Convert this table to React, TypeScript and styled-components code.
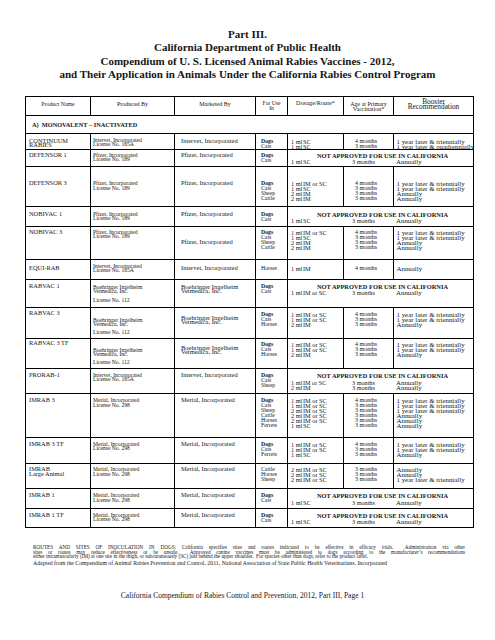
import React from 'react';
import styled, { createGlobalStyle } from 'styled-components';

const Global = createGlobalStyle`
  html, body { margin: 0; padding: 0; background: #fff; }
  body { font-family: "Liberation Serif", "Times New Roman", serif; color: #161616; }
`;

const Page = styled.div`
  width: 495px;
  height: 640px;
  box-sizing: border-box;
  padding-top: 28px;
  overflow: hidden;
`;

const Title = styled.h1`
  margin: 0;
  font-size: 11px;
  line-height: 13.3px;
  font-weight: bold;
  text-align: center;
`;

const Table = styled.table`
  margin: 15px 0 0 25px;
  width: 448px;
  border-collapse: collapse;
  table-layout: fixed;
`;

const Th = styled.th<{ $pt: number; $size: number }>`
  border: 1px solid #000;
  font-weight: normal;
  font-size: ${(p) => p.$size}px;
  line-height: 5.3px;
  text-align: center;
  vertical-align: top;
  padding: ${(p) => p.$pt}px 0 0;
  white-space: pre;
`;

const Row = styled.tr<{ $h: number }>`
  height: ${(p) => p.$h}px;
`;

const SectionCell = styled.td`
  border: 1px solid #000;
  font-weight: bold;
  font-size: 6.3px;
  line-height: 6px;
  padding: 1px 0 0 6px;
  vertical-align: middle;
  white-space: nowrap;
`;

const Td = styled.td<{ $pt: number; $pl: number; $size: number; $lh?: number }>`
  border: 1px solid #000;
  vertical-align: top;
  padding: ${(p) => p.$pt}px 0 0 ${(p) => p.$pl}px;
  font-size: ${(p) => p.$size}px;
  line-height: ${(p) => p.$lh ?? 5}px;
  white-space: pre;
`;

const License = styled.div<{ $gap: number }>`
  margin-top: ${(p) => p.$gap}px;
`;

const Species = styled.div<{ $bold: boolean }>`
  font-weight: ${(p) => (p.$bold ? 'bold' : 'normal')};
`;

const DoseGrid = styled.div`
  display: grid;
  grid-template-columns: 12px auto;
`;

const Banner = styled.div`
  font-weight: bold;
  font-size: 6.4px;
  line-height: 6.2px;
  text-align: center;
  padding-left: 4px;
`;

const SpanGrid = styled.div`
  display: grid;
  grid-template-columns: 12px 49px 44px 1fr;
  padding-left: 3px;
  font-size: 6.2px;
`;

const SpanBooster = styled.div`
  font-size: 6.9px;
`;

const Notes = styled.div`
  margin: 17px 0 0 33px;
  width: 432px;
  font-size: 5.2px;
  line-height: 4.5px;
`;

const NoteLine = styled.div<{ $justify?: boolean }>`
  text-align: ${(p) => (p.$justify ? 'justify' : 'left')};
  text-align-last: ${(p) => (p.$justify ? 'justify' : 'left')};
  white-space: nowrap;
`;

const Adapted = styled.div`
  margin-top: 2px;
  font-size: 5.8px;
  white-space: nowrap;
`;

const Footer = styled.div`
  margin-top: 27px;
  padding-right: 10px;
  text-align: center;
  font-size: 7.5px;
  line-height: 8px;
`;

interface DataRow {
  h: number;
  pt: number;
  name: string[];
  namePt?: number;
  produced: string[];
  producedPt?: number;
  license?: string;
  licenseGap?: number;
  marketed: string[];
  marketedPt?: number;
  species: string[];
  doses: [string, string][];
  ages: string[];
  boosters: string[];
  notApproved?: boolean;
}

const INT = ['Intervet, Incorporated', 'License No. 165A'];
const PFZ = ['Pfizer, Incorporated', 'License No. 189'];
const BOE = ['Boehringer Ingelheim', 'Vetmedica, Inc.'];
const MER = ['Merial, Incorporated', 'License No. 298'];
const Y3 = '1 year later & triennially';

const rows: DataRow[] = [
  {
    h: 16, pt: 4.5, name: ['CONTINUUM', 'RABIES'], produced: INT, producedPt: 3.5, marketed: ['Intervet, Incorporated'],
    species: ['Dogs', 'Cats'], doses: [['1 ml', 'SC'], ['1 ml', 'SC']], ages: ['4 months', '3 months'],
    boosters: [Y3, '1 year later & quadrennially'],
  },
  {
    h: 17, pt: 2.5, name: ['DEFENSOR 1'], produced: PFZ, marketed: ['Pfizer, Incorporated'],
    species: ['Dogs', 'Cats'], doses: [['1 ml', 'SC']], ages: ['3 months'], boosters: ['Annually'], notApproved: true,
  },
  {
    h: 40, pt: 14, name: ['DEFENSOR 3'], produced: PFZ, marketed: ['Pfizer, Incorporated'],
    species: ['Dogs', 'Cats', 'Sheep', 'Cattle'], doses: [['1 ml', 'IM or SC'], ['1 ml', 'SC'], ['2 ml', 'IM'], ['2 ml', 'IM']],
    ages: ['4 months', '3 months', '3 months', '3 months'], boosters: [Y3, Y3, 'Annually', 'Annually'],
  },
  {
    h: 20, pt: 4.5, name: ['NOBIVAC 1'], produced: PFZ, marketed: ['Pfizer, Incorporated'],
    species: ['Dogs', 'Cats'], doses: [['1 ml', 'SC']], ages: ['3 months'], boosters: ['Annually'], notApproved: true,
  },
  {
    h: 33, pt: 2.5, name: ['NOBIVAC 3'], produced: PFZ, marketed: ['Pfizer, Incorporated'], marketedPt: 12.5,
    species: ['Dogs', 'Cats', 'Sheep', 'Cattle'], doses: [['1 ml', 'IM or SC'], ['1 ml', 'SC'], ['2 ml', 'IM'], ['2 ml', 'IM']],
    ages: ['4 months', '3 months', '3 months', '3 months'], boosters: [Y3, Y3, 'Annually', 'Annually'],
  },
  {
    h: 20, pt: 5.5, name: ['EQUI-RAB'], produced: INT, producedPt: 3.5, marketed: ['Intervet, Incorporated'],
    species: ['Horses'], doses: [['1 ml', 'IM']], ages: ['4 months'], boosters: ['Annually'],
  },
  {
    h: 28, pt: 3.5, name: ['RABVAC 1'], produced: BOE, producedPt: 4.5, license: 'License No. 112', licenseGap: 4,
    marketed: BOE, marketedPt: 4.5,
    species: ['Dogs', 'Cats'], doses: [['1 ml', 'IM or SC']], ages: ['3 months'], boosters: ['Annually'], notApproved: true,
  },
  {
    h: 31, pt: 3.5, name: ['RABVAC 3'], namePt: 3, produced: BOE, producedPt: 9.5, license: 'License No. 112', licenseGap: 3.5,
    marketed: BOE, marketedPt: 7.5,
    species: ['Dogs', 'Cats', 'Horses'], doses: [['1 ml', 'IM or SC'], ['1 ml', 'IM or SC'], ['2 ml', 'IM']],
    ages: ['4 months', '3 months', '3 months'], boosters: [Y3, Y3, 'Annually'],
  },
  {
    h: 30, pt: 2.5, name: ['RABVAC 3 TF'], namePt: 2, produced: BOE, producedPt: 8.5, license: 'License No. 112', licenseGap: 3.5,
    marketed: BOE, marketedPt: 6.5,
    species: ['Dogs', 'Cats', 'Horses'], doses: [['1 ml', 'IM or SC'], ['1 ml', 'IM or SC'], ['2 ml', 'IM']],
    ages: ['4 months', '3 months', '3 months'], boosters: [Y3, Y3, 'Annually'],
  },
  {
    h: 25, pt: 4.2, name: ['PRORAB-1'], namePt: 3.5, produced: INT, producedPt: 3.5, marketed: ['Intervet, Incorporated'], marketedPt: 3.5,
    species: ['Dogs', 'Cats', 'Sheep'], doses: [['1 ml', 'IM or SC'], ['2 ml', 'IM']], ages: ['3 months', '3 months'],
    boosters: ['Annually', 'Annually'], notApproved: true,
  },
  {
    h: 44, pt: 4.3, name: ['IMRAB 3'], produced: MER, marketed: ['Merial, Incorporated'],
    species: ['Dogs', 'Cats', 'Sheep', 'Cattle', 'Horses', 'Ferrets'],
    doses: [['1 ml', 'IM or SC'], ['1 ml', 'IM or SC'], ['2 ml', 'IM or SC'], ['2 ml', 'IM or SC'], ['2 ml', 'IM or SC'], ['1 ml', 'SC']],
    ages: ['4 months', '3 months', '3 months', '3 months', '3 months', '3 months'],
    boosters: [Y3, Y3, Y3, 'Annually', 'Annually', 'Annually'],
  },
  {
    h: 26, pt: 3.6, name: ['IMRAB 3 TF'], produced: MER, marketed: ['Merial, Incorporated'],
    species: ['Dogs', 'Cats', 'Ferrets'], doses: [['1 ml', 'IM or SC'], ['1 ml', 'IM or SC'], ['1 ml', 'SC']],
    ages: ['4 months', '3 months', '3 months'], boosters: [Y3, Y3, 'Annually'],
  },
  {
    h: 25, pt: 3.2, name: ['IMRAB', 'Large Animal'], produced: MER, marketed: ['Merial, Incorporated'],
    species: ['Cattle', 'Horses', 'Sheep'], doses: [['2 ml', 'IM or SC'], ['2 ml', 'IM or SC'], ['2 ml', 'IM or SC']],
    ages: ['3 months', '3 months', '3 months'], boosters: ['Annually', 'Annually', Y3],
  },
  {
    h: 20, pt: 4.3, name: ['IMRAB 1'], produced: MER, marketed: ['Merial, Incorporated'],
    species: ['Dogs', 'Cats'], doses: [['1 ml', 'SC']], ages: ['3 months'], boosters: ['Annually'], notApproved: true,
  },
  {
    h: 19, pt: 3.4, name: ['IMRAB 1 TF'], produced: MER, marketed: ['Merial, Incorporated'],
    species: ['Dogs', 'Cats'], doses: [['1 ml', 'SC']], ages: ['3 months'], boosters: ['Annually'], notApproved: true,
  },
];

const headers: { label: string; pt: number; size: number }[] = [
  { label: 'Product Name', pt: 5, size: 5.8 },
  { label: 'Produced By', pt: 5, size: 6 },
  { label: 'Marketed By', pt: 5, size: 6 },
  { label: 'For Use\nIn', pt: 4, size: 5.6 },
  { label: 'Dosage/Route*', pt: 3, size: 6.3 },
  { label: 'Age at Primary\nVaccination*', pt: 5, size: 6 },
  { label: 'Booster\nRecommendation', pt: 2, size: 7.3 },
];

const widths = [65, 84, 81, 32, 56, 50, 80];

const lines = (arr: string[]) => arr.join('\n');

function VaccineRow({ r }: { r: DataRow }) {
  const amounts = lines(r.doses.map((d) => d[0]));
  const routes = lines(r.doses.map((d) => d[1]));
  return (
    <Row $h={r.h}>
      <Td $pt={r.namePt ?? r.pt} $pl={3} $size={6.4} $lh={4.8}>
        {lines(r.name)}
      </Td>
      <Td $pt={r.producedPt ?? r.pt} $pl={2} $size={5.6} $lh={4.6}>
        {lines(r.produced)}
        {r.license && <License $gap={r.licenseGap ?? 0}>{r.license}</License>}
      </Td>
      <Td $pt={r.marketedPt ?? r.pt} $pl={6} $size={6.5} $lh={4.8}>
        {lines(r.marketed)}
      </Td>
      <Td $pt={r.pt} $pl={5} $size={5.8}>
        {r.species.map((s) => (
          <Species key={s} $bold={s === 'Dogs'}>
            {s}
          </Species>
        ))}
      </Td>
      {r.notApproved ? (
        <Td $pt={r.pt} $pl={0} $size={6.2} colSpan={3}>
          <Banner>NOT APPROVED FOR USE IN CALIFORNIA</Banner>
          <SpanGrid>
            <div>{amounts}</div>
            <div>{routes}</div>
            <div>{lines(r.ages)}</div>
            <SpanBooster>{lines(r.boosters)}</SpanBooster>
          </SpanGrid>
        </Td>
      ) : (
        <>
          <Td $pt={r.pt} $pl={3} $size={6.3}>
            <DoseGrid>
              <div>{amounts}</div>
              <div>{routes}</div>
            </DoseGrid>
          </Td>
          <Td $pt={r.pt} $pl={11} $size={6}>
            {lines(r.ages)}
          </Td>
          <Td $pt={r.pt} $pl={2.5} $size={6.9}>
            {lines(r.boosters)}
          </Td>
        </>
      )}
    </Row>
  );
}

export default function App() {
  return (
    <>
      <Global />
      <Page>
        <Title>
          Part III.
          <br />
          California Department of Public Health
          <br />
          Compendium of U. S. Licensed Animal Rabies Vaccines - 2012,
          <br />
          and Their Application in Animals Under the California Rabies Control Program
        </Title>
        <Table>
          <colgroup>
            {widths.map((w, i) => (
              <col key={i} style={{ width: w }} />
            ))}
          </colgroup>
          <thead>
            <Row $h={19}>
              {headers.map((h) => (
                <Th key={h.label} $pt={h.pt} $size={h.size}>
                  {h.label}
                </Th>
              ))}
            </Row>
          </thead>
          <tbody>
            <Row $h={18}>
              <SectionCell colSpan={7}>A)&nbsp; MONOVALENT – INACTIVATED</SectionCell>
            </Row>
            {rows.map((r) => (
              <VaccineRow key={r.name.join(' ')} r={r} />
            ))}
          </tbody>
        </Table>
        <Notes>
          <NoteLine $justify>
            ROUTES AND SITES OF INOCULATION IN DOGS: California specifies sites and routes indicated to be effective in efficacy trials.&nbsp; Administration via other
          </NoteLine>
          <NoteLine $justify>
            sites or routes may reduce effectiveness or be unsafe.&nbsp; Approved canine vaccines must be administered to dogs according to the manufacturer’s recommendations
          </NoteLine>
          <NoteLine>
            either intramuscularly (IM) at one site in the thigh, or subcutaneously (SC) just behind the upper shoulder.&nbsp; For species other than dogs, refer to the product label.
          </NoteLine>
          <Adapted>
            Adapted from the Compendium of Animal Rabies Prevention and Control, 2011, National Association of State Public Health Veterinarians, Incorporated
          </Adapted>
        </Notes>
        <Footer>California Compendium of Rabies Control and Prevention, 2012, Part III, Page 1</Footer>
      </Page>
    </>
  );
}
